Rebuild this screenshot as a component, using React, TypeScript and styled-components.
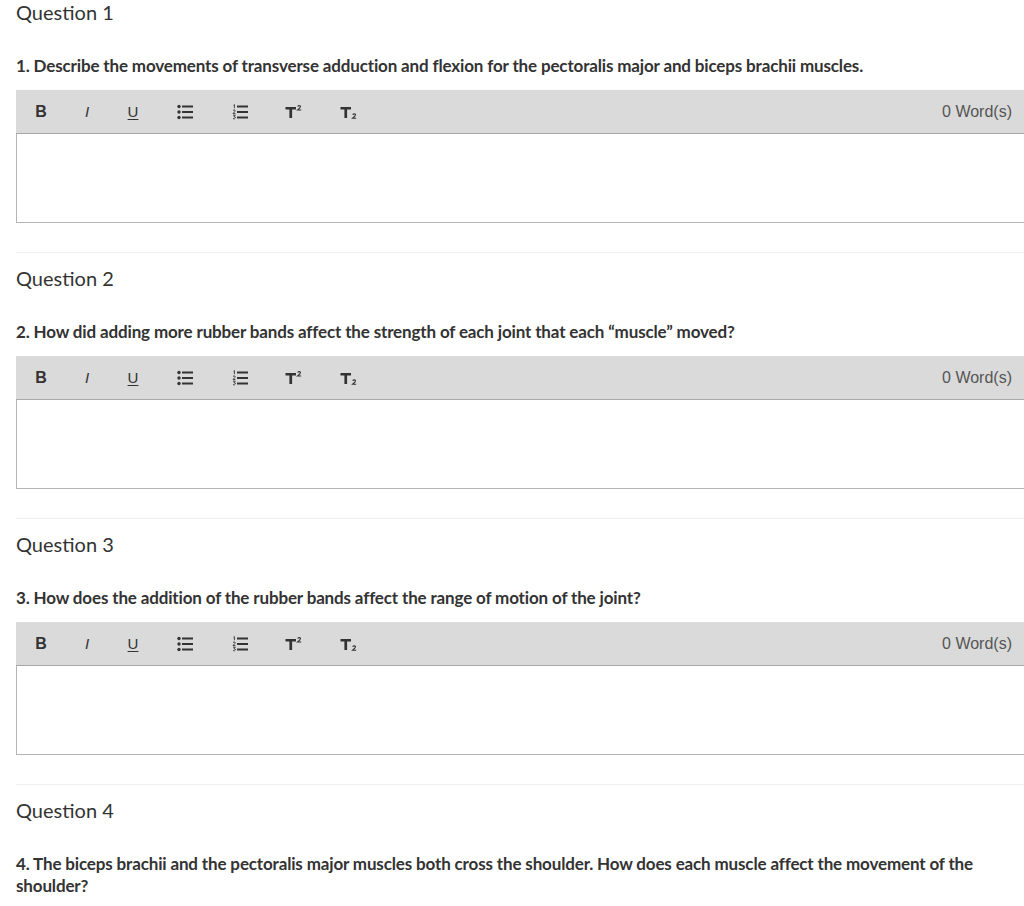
import React from "react";
import styled, { createGlobalStyle } from "styled-components";

const Global = createGlobalStyle`
  html, body { margin: 0; padding: 0; background: #fff; overflow-x: hidden; }
  body { font-family: Lato, "Open Sans", sans-serif; color: #333; }
`;

const Page = styled.main`
  padding: 0 0 0 16px;
  width: 1030px;
  box-sizing: border-box;
`;

const Block = styled.section`
  display: flex;
  flex-direction: column;
  padding-bottom: 29px;
  margin-bottom: 13px;
  border-bottom: 1px solid #eeeeee;
`;

const Heading = styled.h2`
  margin: 0;
  font-size: 20px;
  font-weight: 400;
  line-height: 24px;
  color: #333;
`;

const Prompt = styled.p`
  margin: 31px 0 13px;
  font-size: 17px;
  font-weight: 700;
  line-height: 22px;
  color: #333;
  letter-spacing: -0.15px;
`;

const Editor = styled.div`
  display: flex;
  flex-direction: column;
`;

const Toolbar = styled.div`
  display: flex;
  align-items: center;
  height: 43px;
  background: #dadada;
  border-bottom: 1px solid #a8a8a8;
  padding-left: 2px;
`;

const ToolButton = styled.span<{ $w: number }>`
  display: flex;
  align-items: center;
  justify-content: center;
  width: ${(p) => p.$w}px;
  height: 100%;
  color: #333;
  font-family: "Liberation Sans", Arial, sans-serif;
  font-size: 16px;
`;

const Bold = styled.span`
  font-weight: 700;
`;
const Ital = styled.span`
  font-style: italic;
  font-size: 15px;
`;
const Under = styled.span`
  text-decoration: underline;
  text-underline-offset: 2px;
  font-size: 15px;
`;

const WordCount = styled.span`
  margin-left: auto;
  padding-right: 18px;
  font-family: "Liberation Sans", Arial, sans-serif;
  font-size: 16px;
  color: #555;
`;

const Area = styled.div`
  height: 88px;
  border-left: 1px solid #b5b5b5;
  border-bottom: 1px solid #b5b5b5;
  background: #fff;
`;

const Bullets = () => (
  <svg width="16" height="16" viewBox="0 0 16 16">
    <g fill="#333">
      <circle cx="2" cy="2.5" r="1.7" />
      <circle cx="2" cy="8" r="1.7" />
      <circle cx="2" cy="13.5" r="1.7" />
      <rect x="5" y="1.5" width="11" height="2" />
      <rect x="5" y="7" width="11" height="2" />
      <rect x="5" y="12.5" width="11" height="2" />
    </g>
  </svg>
);

const Numbers = () => (
  <svg width="16" height="16" viewBox="0 0 16 16">
    <g fill="#333">
      <rect x="5" y="1.5" width="11" height="2" />
      <rect x="5" y="7" width="11" height="2" />
      <rect x="5" y="12.5" width="11" height="2" />
    </g>
    <g stroke="#333" strokeWidth="0.9" fill="none">
      <path d="M1.6 1.2 L2.4 0.6 L2.4 4.2" />
      <path d="M1 6.4 Q2.2 5.4 3.2 6.4 Q3.4 7.2 1 9.6 L3.5 9.6" />
      <path d="M1 11.2 L3.3 11.2 L2 12.6 Q3.6 12.6 3.4 14 Q2.6 15.4 1 14.6" />
    </g>
  </svg>
);

const Sup = () => (
  <svg width="17" height="14" viewBox="0 0 17 14">
    <path d="M0.5 2 H11 V4.4 H7.1 V13 H4.4 V4.4 H0.5 Z" fill="#333" />
    <path
      d="M12.6 1.4 Q14 0 15.4 1.1 Q16 2.2 12.6 5 H16.2"
      stroke="#333"
      strokeWidth="1.1"
      fill="none"
    />
  </svg>
);

const Sub = () => (
  <svg width="17" height="14" viewBox="0 0 17 14">
    <path d="M0.5 2 H11 V4.4 H7.1 V13 H4.4 V4.4 H0.5 Z" fill="#333" />
    <path
      d="M12.6 9.6 Q14 8.2 15.4 9.3 Q16 10.4 12.6 13.2 H16.2"
      stroke="#333"
      strokeWidth="1.1"
      fill="none"
    />
  </svg>
);

const questions = [
  "1. Describe the movements of transverse adduction and flexion for the pectoralis major and biceps brachii muscles.",
  "2. How did adding more rubber bands affect the strength of each joint that each \u201Cmuscle\u201D moved?",
  "3. How does the addition of the rubber bands affect the range of motion of the joint?",
  "4. The biceps brachii and the pectoralis major muscles both cross the shoulder. How does each muscle affect the movement of the shoulder?",
];

const EditorBox = () => (
  <Editor>
    <Toolbar>
      <ToolButton $w={46}>
        <Bold>B</Bold>
      </ToolButton>
      <ToolButton $w={46}>
        <Ital>I</Ital>
      </ToolButton>
      <ToolButton $w={46}>
        <Under>U</Under>
      </ToolButton>
      <ToolButton $w={58}>
        <Bullets />
      </ToolButton>
      <ToolButton $w={51}>
        <Numbers />
      </ToolButton>
      <ToolButton $w={57}>
        <Sup />
      </ToolButton>
      <ToolButton $w={52}>
        <Sub />
      </ToolButton>
      <WordCount>0 Word(s)</WordCount>
    </Toolbar>
    <Area />
  </Editor>
);

export default function App() {
  return (
    <>
      <Global />
      <Page>
        {questions.map((q, i) => (
          <Block key={i}>
            <Heading>Question {i + 1}</Heading>
            <Prompt>{q}</Prompt>
            {i < 3 && <EditorBox />}
          </Block>
        ))}
      </Page>
    </>
  );
}
